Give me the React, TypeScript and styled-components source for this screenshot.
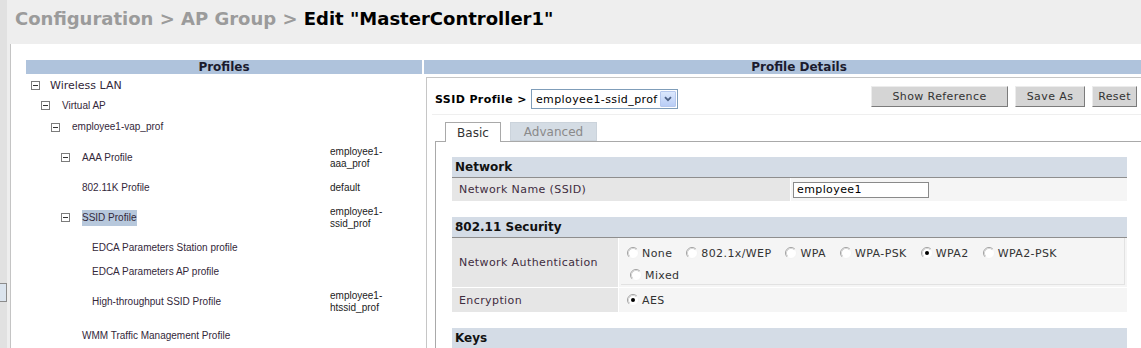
import React from "react";
import styled, { createGlobalStyle } from "styled-components";

const GlobalStyle = createGlobalStyle`
    html, body {
        margin:0;
        padding:0;
        background:#fff;
        overflow:hidden;
    }
    body {
        font-family:"DejaVu Sans", Verdana, sans-serif;
    }
`;

const UI_FONT = `"DejaVu Sans", Verdana, sans-serif`;
const TREE_FONT = `"Liberation Sans", Tahoma, Arial, sans-serif`;

const Page = styled.div`
    display:flex;
    width:1141px;
    height:348px;
    overflow:hidden;
`;

const SideStrip = styled.div`
    width:7px;
    flex:none;
    background:#e1e1e1;
    padding-top:283px;
    box-sizing:border-box;
`;
const StripHandle = styled.div`
    width:7px;
    height:19px;
    box-sizing:border-box;
    border:1px solid #8c8c8c;
    border-left:none;
    background:#dbe4ee;
`;

const Main = styled.div`
    flex:1;
    min-width:0;
    display:flex;
    flex-direction:column;
    background:#eeeeee;
`;

const TitleBar = styled.h1`
    margin:0;
    height:44px;
    box-sizing:border-box;
    padding:8px 0 0 8px;
    font:bold 18px/22px ${UI_FONT};
    color:#9b9b9b;
    white-space:nowrap;
    span{
        color:#000;
    }
`;

const Content = styled.div`
    flex:1;
    min-height:0;
    margin-left:3px;
    border-left:1px solid #c4c4c4;
    background:#fff;
    display:flex;
    gap:2px;
    padding:16px 0 0 15px;
    overflow:hidden;
`;

const PaneHeader = styled.div`
    height:14px;
    background:#afc3dc;
    color:#1b1b2e;
    font:bold 12px/14px ${UI_FONT};
    text-align:center;
    white-space:nowrap;
`;

/* ---------- profiles tree ---------- */

const ProfilesPane = styled.div`
    width:396px;
    flex:none;
`;

const TreeRow = styled.div<{ $h: number }>`
    display:grid;
    grid-template-columns:304px 1fr;
    align-items:center;
    height:${p => p.$h}px;
`;

const TreeLabel = styled.div<{ $indent: number }>`
    display:flex;
    align-items:center;
    padding-left:${p => p.$indent}px;
    font:10px/12px ${TREE_FONT};
    color:#33283a;
    white-space:nowrap;
`;

const LabelText = styled.span<{ $large?: boolean; $selected?: boolean }>`
    font-family:${p => (p.$large ? UI_FONT : TREE_FONT)};
    font-size:${p => (p.$large ? "11px" : "10px")};
    line-height:${p => (p.$large ? "13px" : "12px")};
    background:${p => (p.$selected ? "#b7c8dc" : "transparent")};
    padding:${p => (p.$selected ? "2px 1px 2px 0" : "0")};
`;

const BoxIcon = styled.svg<{ $gap: number }>`
    flex:none;
    margin-right:${p => p.$gap}px;
`;

const TreeValue = styled.div`
    font:10px/12px ${TREE_FONT};
    color:#222;
    white-space:nowrap;
`;

function CollapseBox({ gap }: { gap: number }) {
    return (
        <BoxIcon $gap={gap} width="9" height="9" viewBox="0 0 9 9">
            <rect x="0.5" y="0.5" width="8" height="8" fill="#fff" stroke="#7c7c7c" />
            <rect x="2" y="4" width="5" height="1" fill="#333" />
        </BoxIcon>
    );
}

type TreeItem = {
    label: string;
    indent: number;
    h: number;
    box?: boolean;
    gap?: number;
    large?: boolean;
    selected?: boolean;
    value?: string[];
};

const treeItems: TreeItem[] = [
    { label: "Wireless LAN", indent: 5, box: true, gap: 10, h: 23, large: true },
    { label: "Virtual AP", indent: 15, box: true, h: 17 },
    { label: "employee1-vap_prof", indent: 25, box: true, h: 26 },
    { label: "AAA Profile", indent: 35, box: true, h: 35, value: ["employee1-", "aaa_prof"] },
    { label: "802.11K Profile", indent: 56, h: 25, value: ["default"] },
    { label: "SSID Profile", indent: 35, box: true, h: 35, selected: true, value: ["employee1-", "ssid_prof"] },
    { label: "EDCA Parameters Station profile", indent: 66, h: 25 },
    { label: "EDCA Parameters AP profile", indent: 66, h: 23 },
    { label: "High-throughput SSID Profile", indent: 66, h: 37, value: ["employee1-", "htssid_prof"] },
    { label: "WMM Traffic Management Profile", indent: 56, h: 31 },
];

/* ---------- profile details ---------- */

const DetailsPane = styled.div`
    width:750px;
    flex:none;
`;

const Panel = styled.div`
    margin:3px 0 0 2px;
    border:1px solid #c6c6c6;
    border-bottom:none;
    height:400px;
    font:11px/13px ${UI_FONT};
    letter-spacing:0.4px;
    color:#333;
`;

const Toolbar = styled.div`
    display:flex;
    align-items:center;
    margin-left:5px;
    padding:11px 36px 5px 3px;
    border-bottom:1px solid #efefef;
`;

const ToolbarLabel = styled.span`
    font-weight:bold;
    color:#000;
    margin-right:4px;
`;

const Select = styled.div`
    width:147px;
    height:20px;
    box-sizing:border-box;
    border:1px solid #7f9db9;
    display:flex;
    align-items:center;
    justify-content:space-between;
    padding:0 1px 0 4px;
    color:#000;
`;

const SelectArrow = styled.span`
    width:16px;
    height:16px;
    box-sizing:border-box;
    border:1px solid #b6c8ee;
    border-radius:1px;
    background:linear-gradient(#dce8fd, #b9cdf6);
    display:flex;
    align-items:center;
    justify-content:center;
`;

const ButtonGroup = styled.div`
    margin-left:auto;
    margin-top:-5px;
    display:flex;
    gap:7px;
`;

const Button = styled.button<{ $w: number }>`
    width:${p => p.$w}px;
    height:21px;
    padding:0;
    background:#d5d5d5;
    border:1px solid;
    border-color:#ececec #7b7b7b #7b7b7b #ececec;
    font:11px/13px ${UI_FONT};
    letter-spacing:0.4px;
    color:#333;
`;

const TabArea = styled.div`
    margin:7px 0 0 8px;
`;

const TabStrip = styled.div`
    display:flex;
    gap:9px;
    padding-left:10px;
    margin-bottom:-1px;
`;

const Tab = styled.div<{ $active?: boolean; $w: number }>`
    width:${p => p.$w}px;
    height:${p => (p.$active ? 20 : 19)}px;
    box-sizing:border-box;
    display:flex;
    align-items:center;
    justify-content:center;
    font:12px/14px ${UI_FONT};
    letter-spacing:0;
    color:${p => (p.$active ? "#333" : "#8a8a8a")};
    background:${p => (p.$active ? "#fff" : "#d4dce4")};
    border:1px solid ${p => (p.$active ? "#a9a9a9" : "#cbd3db")};
    border-bottom:${p => (p.$active ? "none" : "1px solid #cbd3db")};
`;

const TabPanel = styled.div`
    border-top:1px solid #a9a9a9;
    border-left:1px solid #a9a9a9;
    padding:15px 0 0 16px;
    height:300px;
`;

const Section = styled.div`
    width:675px;
    margin-bottom:16px;
`;

const SectionHeader = styled.div`
    height:20px;
    border-bottom:1px solid #8e8e8e;
    background:#d4dce6;
    padding-left:3px;
    font:bold 12px/20px ${UI_FONT};
    letter-spacing:0;
    color:#111;
`;

const FieldGrid = styled.div<{ $label: number }>`
    display:grid;
    grid-template-columns:${p => p.$label}px 1fr;
    column-gap:1px;
    row-gap:1px;
    background:#fff;
`;

const LabelCell = styled.div<{ $h: number }>`
    height:${p => p.$h}px;
    background:#e6e6e6;
    display:flex;
    align-items:center;
    padding-left:7px;
    color:#3f2d3f;
    white-space:nowrap;
`;

const ValueCell = styled.div<{ $h: number }>`
    height:${p => p.$h}px;
    background:#f5f5f5;
    display:flex;
    align-items:center;
    padding-left:2px;
    box-sizing:border-box;
`;

const TextInput = styled.div`
    width:136px;
    height:16px;
    box-sizing:border-box;
    border:1px solid #8a8a8a;
    background:#fff;
    padding-left:3px;
    line-height:14px;
    color:#000;
`;

const RadioBox = styled.div`
    align-self:stretch;
    width:504px;
    margin-bottom:2px;
    border-right:1px solid #e2e2e2;
    border-bottom:1px solid #e2e2e2;
    padding:4px 0 0 6px;
    box-sizing:border-box;
`;

const RadioLine = styled.div<{ $shift?: number }>`
    display:flex;
    align-items:center;
    gap:14px;
    height:22px;
    padding-left:${p => p.$shift || 0}px;
`;

const RadioItem = styled.label`
    display:flex;
    align-items:center;
    gap:3px;
    color:#333;
    white-space:nowrap;
`;

function RadioDot({ checked }: { checked?: boolean }) {
    return (
        <svg width="12" height="12" viewBox="0 0 12 12">
            <circle cx="6" cy="6" r="5.5" fill="#fff" />
            <path d="M2.11 9.89A5.5 5.5 0 0 1 9.89 2.11" fill="none" stroke="#a0a0a0" />
            <path d="M2.82 9.18A4.5 4.5 0 0 1 9.18 2.82" fill="none" stroke="#d6d6d6" />
            <path d="M9.89 2.11A5.5 5.5 0 0 1 2.11 9.89" fill="none" stroke="#f2f2f2" />
            {checked && <circle cx="6" cy="6" r="2" fill="#000" />}
        </svg>
    );
}

function Radio({ label, checked }: { label: string; checked?: boolean }) {
    return (
        <RadioItem>
            <RadioDot checked={checked} />
            {label}
        </RadioItem>
    );
}

const authOptions = ["None", "802.1x/WEP", "WPA", "WPA-PSK", "WPA2", "WPA2-PSK"];

export default function App() {
    return (
        <Page>
            <GlobalStyle />
            <SideStrip>
                <StripHandle />
            </SideStrip>
            <Main>
                <TitleBar>
                    Configuration &gt; AP Group &gt; <span>Edit "MasterController1"</span>
                </TitleBar>
                <Content>
                    <ProfilesPane>
                        <PaneHeader>Profiles</PaneHeader>
                        {treeItems.map(item => (
                            <TreeRow key={item.label} $h={item.h}>
                                <TreeLabel $indent={item.indent}>
                                    {item.box && <CollapseBox gap={item.gap ?? 12} />}
                                    <LabelText $large={item.large} $selected={item.selected}>
                                        {item.label}
                                    </LabelText>
                                </TreeLabel>
                                <TreeValue>
                                    {item.value?.map(v => <div key={v}>{v}</div>)}
                                </TreeValue>
                            </TreeRow>
                        ))}
                    </ProfilesPane>
                    <DetailsPane>
                        <PaneHeader>Profile Details</PaneHeader>
                        <Panel>
                            <Toolbar>
                                <ToolbarLabel>SSID Profile &gt;</ToolbarLabel>
                                <Select>
                                    employee1-ssid_prof
                                    <SelectArrow>
                                        <svg width="8" height="6" viewBox="0 0 8 6">
                                            <path d="M1 1.2 4 4.2 7 1.2" fill="none" stroke="#4d6185" strokeWidth="1.8" />
                                        </svg>
                                    </SelectArrow>
                                </Select>
                                <ButtonGroup>
                                    <Button $w={137}>Show Reference</Button>
                                    <Button $w={70}>Save As</Button>
                                    <Button $w={45}>Reset</Button>
                                </ButtonGroup>
                            </Toolbar>
                            <TabArea>
                                <TabStrip>
                                    <Tab $active $w={56}>Basic</Tab>
                                    <Tab $w={87}>Advanced</Tab>
                                </TabStrip>
                                <TabPanel>
                                    <Section>
                                        <SectionHeader>Network</SectionHeader>
                                        <FieldGrid $label={338}>
                                            <LabelCell $h={23}>Network Name (SSID)</LabelCell>
                                            <ValueCell $h={23}>
                                                <TextInput>employee1</TextInput>
                                            </ValueCell>
                                        </FieldGrid>
                                    </Section>
                                    <Section>
                                        <SectionHeader>802.11 Security</SectionHeader>
                                        <FieldGrid $label={166}>
                                            <LabelCell $h={49}>Network Authentication</LabelCell>
                                            <ValueCell $h={49}>
                                                <RadioBox>
                                                    <RadioLine>
                                                        {authOptions.map(o => (
                                                            <Radio key={o} label={o} checked={o === "WPA2"} />
                                                        ))}
                                                    </RadioLine>
                                                    <RadioLine $shift={3}>
                                                        <Radio label="Mixed" />
                                                    </RadioLine>
                                                </RadioBox>
                                            </ValueCell>
                                            <LabelCell $h={24}>Encryption</LabelCell>
                                            <ValueCell $h={24}>
                                                <RadioLine $shift={6}>
                                                    <Radio label="AES" checked />
                                                </RadioLine>
                                            </ValueCell>
                                        </FieldGrid>
                                    </Section>
                                    <Section>
                                        <SectionHeader>Keys</SectionHeader>
                                    </Section>
                                </TabPanel>
                            </TabArea>
                        </Panel>
                    </DetailsPane>
                </Content>
            </Main>
        </Page>
    );
}
